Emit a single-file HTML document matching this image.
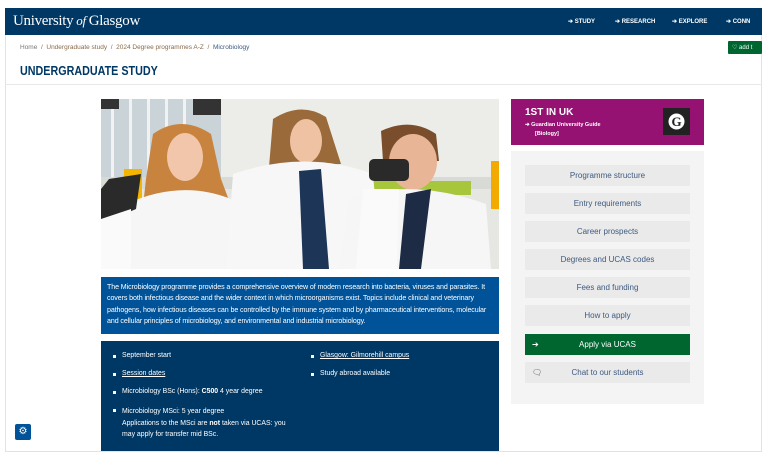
<!DOCTYPE html>
<html><head><meta charset="utf-8"><style>
*{box-sizing:border-box;margin:0;padding:0}
body{width:768px;height:454px;background:#fff;font-family:"Liberation Sans",sans-serif;position:relative;overflow:hidden}
.frame{position:absolute;left:5px;top:8px;width:757px;height:444px;border:1px solid #e2e2e2;background:#fff}
.hdr{position:absolute;left:5px;top:8px;width:757px;height:27px;background:#003865}
.logo{position:absolute;left:13px;top:13px;color:#fff;font-family:"Liberation Serif",serif;font-size:15px;letter-spacing:-0.3px}
.nav{position:absolute;top:18px;color:#fff;font-size:6px;font-weight:bold}
.bc{position:absolute;left:20px;top:44px;font-size:6.5px;color:#8a6a4a}
.bc span{color:#777}
.title{position:absolute;left:20px;top:64px;font-size:12.5px;font-weight:bold;color:#003865;transform:scaleX(0.86);transform-origin:left}
.sep{position:absolute;left:5px;top:84px;width:757px;height:1px;background:#e8e8e8}
.add{position:absolute;left:728px;top:41px;width:34px;height:13px;background:#006630;color:#fff;font-size:6px;padding:3px 4px;border-radius:1px}
.photo{position:absolute;left:101px;top:99px;width:398px;height:170px}
.blue{position:absolute;left:101px;top:277px;width:398px;height:57px;background:#005398;color:#fff;font-size:7.1px;line-height:11.3px;padding:5px 6px;letter-spacing:-0.1px}
.dark{position:absolute;left:101px;top:341px;width:398px;height:110px;background:#003865;color:#fff;font-size:6.9px}
.dark div{position:absolute}
.dark div:before{content:"";position:absolute;left:-9px;top:3px;width:3px;height:3px;background:#fff}
.u{text-decoration:underline}
.purple{position:absolute;left:511px;top:99px;width:193px;height:46px;background:#951272;color:#fff}
.gl{position:absolute;left:663px;top:108px;width:27px;height:27px;background:#222}
.panel{position:absolute;left:511px;top:151px;width:193px;height:253px;background:#f4f4f4}
.btn{position:absolute;left:525px;width:165px;height:21px;background:#eaeaea;color:#3d5a80;font-size:8px;text-align:center;line-height:21px}
.gear{position:absolute;left:15px;top:424px;width:16px;height:16px;background:#005398;border-radius:2px;color:#fff;font-size:10px;text-align:center;line-height:16px}
</style></head><body>
<div class="frame"></div>
<div class="hdr"></div>
<div class="logo">University<i style="font-size:13px"> of </i>Glasgow</div>
<div class="nav" style="left:568px">➔ STUDY</div>
<div class="nav" style="left:615px">➔ RESEARCH</div>
<div class="nav" style="left:672px">➔ EXPLORE</div>
<div class="nav" style="left:726px">➔ CONN</div>
<div class="bc"><span>Home</span> &nbsp;/&nbsp; Undergraduate study &nbsp;/&nbsp; 2024 Degree programmes A-Z &nbsp;/&nbsp; <span style="color:#3d5a80">Microbiology</span></div>
<div class="add">♡ add t</div>
<div class="title">UNDERGRADUATE STUDY</div>
<div class="sep"></div>
<svg class="photo" viewBox="0 0 398 170" preserveAspectRatio="none">
<rect width="398" height="170" fill="#e6e7e2"/>
<rect x="0" y="0" width="120" height="80" fill="#c9d3d8"/>
<g fill="#f2f2f2"><rect x="10" y="0" width="3" height="80"/><rect x="28" y="0" width="3" height="80"/><rect x="46" y="0" width="3" height="80"/><rect x="64" y="0" width="3" height="80"/><rect x="82" y="0" width="3" height="80"/></g>
<rect x="0" y="0" width="18" height="10" fill="#333"/><rect x="92" y="0" width="32" height="16" fill="#333"/>
<rect x="120" y="0" width="278" height="78" fill="#ecede8"/>
<rect x="0" y="78" width="398" height="12" fill="#d8dad5"/>
<rect x="270" y="82" width="100" height="14" fill="#a7c63c"/>
<rect x="390" y="62" width="8" height="48" fill="#f2a900"/>
<rect x="23" y="70" width="18" height="30" fill="#f5b400"/>
<path d="M52 35 Q80 15 110 35 L120 80 L135 120 L40 125 L45 80 Z" fill="#c8843e"/>
<ellipse cx="84" cy="58" rx="18" ry="24" fill="#f1c6ab"/>
<path d="M15 170 L25 105 Q80 80 130 100 L165 170 Z" fill="#f6f6f6"/>
<path d="M172 20 Q200 2 225 18 L240 65 L168 68 Z" fill="#9a6a3a"/>
<ellipse cx="205" cy="42" rx="16" ry="22" fill="#f0c2a4"/>
<path d="M125 170 L132 75 Q205 50 272 75 L280 170 Z" fill="#f7f7f7"/>
<path d="M198 72 L220 70 L228 170 L202 170 Z" fill="#1d3557"/>
<path d="M280 32 Q310 18 335 35 L338 62 L282 62 Z" fill="#7a4e2c"/>
<ellipse cx="312" cy="63" rx="24" ry="28" fill="#e8b596"/>
<path d="M238 170 L248 100 Q310 78 385 105 L390 170 Z" fill="#f6f6f6"/>
<path d="M305 95 L330 90 L320 170 L298 170 Z" fill="#1d2b44"/>
<rect x="268" y="60" width="40" height="22" rx="5" fill="#2a2a2a"/>
<path d="M262 90 L298 90 L296 170 L255 170 Z" fill="#fafafa"/>
<path d="M8 80 L40 75 L35 110 L0 125 L0 90 Z" fill="#2a2a2a"/>
<path d="M0 120 L30 110 L30 170 L0 170 Z" fill="#fafafa"/>
</svg>
<div class="blue">The Microbiology programme provides a comprehensive overview of modern research into bacteria, viruses and parasites. It covers both infectious disease and the wider context in which microorganisms exist. Topics include clinical and veterinary pathogens, how infectious diseases can be controlled by the immune system and by pharmaceutical interventions, molecular and cellular principles of microbiology, and environmental and industrial microbiology.</div>
<div class="dark">
<div style="left:21px;top:11px">September start</div>
<div style="left:21px;top:29px" class="u">Session dates</div>
<div style="left:21px;top:47px">Microbiology BSc (Hons): <b>C500</b> 4 year degree</div>
<div style="left:21px;top:65px;line-height:11.5px">Microbiology MSci: 5 year degree<br>Applications to the MSci are <b>not</b> taken via UCAS: you<br>may apply for transfer mid BSc.</div>
<div style="left:219px;top:11px" class="u">Glasgow: Gilmorehill campus</div>
<div style="left:219px;top:29px">Study abroad available</div>
</div>
<div class="purple">
<div style="position:absolute;left:14px;top:8px;font-size:10px;font-weight:bold">1ST IN UK</div>
<div style="position:absolute;left:14px;top:23px;font-size:5.5px;font-weight:bold">➔ Guardian University Guide</div>
<div style="position:absolute;left:24px;top:32px;font-size:5.5px;font-weight:bold">[Biology]</div>
</div>
<div class="gl"><svg width="27" height="27"><circle cx="13.5" cy="13.5" r="8" fill="#fff"/><text x="13.5" y="18" font-family="Liberation Serif" font-size="13" font-weight="bold" text-anchor="middle" fill="#222">G</text></svg></div>
<div class="panel"></div>
<div class="btn" style="top:165px">Programme structure</div>
<div class="btn" style="top:193px">Entry requirements</div>
<div class="btn" style="top:221px">Career prospects</div>
<div class="btn" style="top:249px">Degrees and UCAS codes</div>
<div class="btn" style="top:277px">Fees and funding</div>
<div class="btn" style="top:305px">How to apply</div>
<div class="btn" style="top:334px;background:#006630;color:#fff"><span style="position:absolute;left:7px">➔</span>Apply via UCAS</div>
<div class="btn" style="top:362px"><span style="position:absolute;left:7px;color:#555">🗨</span>Chat to our students</div>
<div class="gear">⚙</div>
</body></html>
